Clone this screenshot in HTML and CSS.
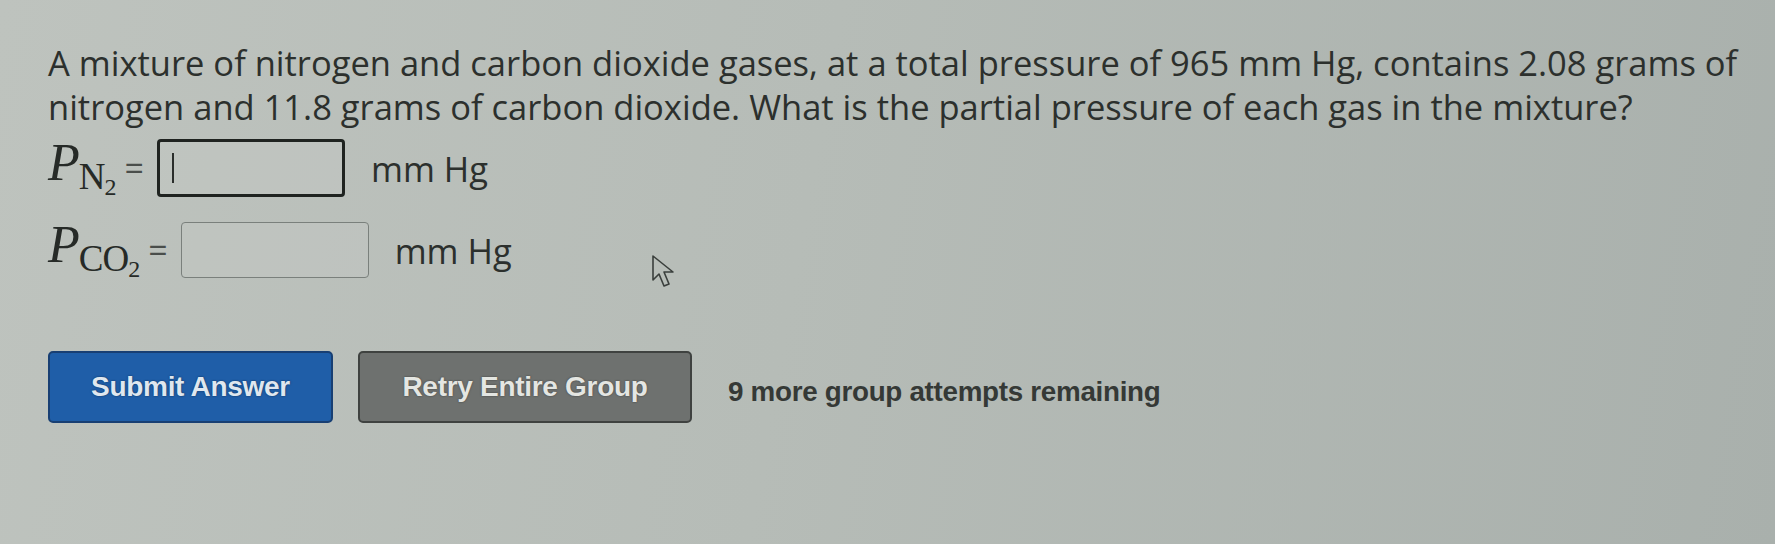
FILE: index.html
```html
<!DOCTYPE html>
<html lang="en">
<head>
<meta charset="UTF-8" />
<title>Partial Pressure Question</title>
<link rel="stylesheet" href="styles.css">
</head>
<body>
<div class="question">
  <p class="prompt">A mixture of nitrogen and carbon dioxide gases, at a total pressure of 965 mm Hg, contains 2.08 grams of nitrogen and 11.8 grams of carbon dioxide. What is the partial pressure of each gas in the mixture?</p>

  <div class="answer-row">
    <span class="math"><i>P</i><sub>N<sub>2</sub></sub></span>
    <span class="eq">=</span>
    <span class="field focused"><span class="caret"></span></span>
    <span class="unit">mm Hg</span>
  </div>
  <div class="answer-row">
    <span class="math"><i>P</i><sub>CO<sub>2</sub></sub></span>
    <span class="eq">=</span>
    <span class="field"></span>
    <span class="unit">mm Hg</span>
  </div>

  <div class="actions">
    <button class="btn btn-submit">Submit Answer</button>
    <button class="btn btn-retry">Retry Entire Group</button>
    <span class="attempts">9 more group attempts remaining</span>
  </div>

  <!-- mouse pointer -->
  <svg class="pointer" width="28" height="36" viewBox="0 0 28 36">
    <path d="M2 2 L2 26 L8 20 L13 32 L18 30 L13 18 L22 18 Z" fill="none" stroke="#3a3f3c" stroke-width="1.6" stroke-linejoin="round"/>
  </svg>
</div>
</body>
</html>
```

FILE: styles.css
```css
:root {
  --text: #2c302d;
  --font: 'Open Sans', 'Noto Sans', sans-serif;
  --ui-font: 'Liberation Sans', Arial, sans-serif;
}

* { box-sizing: border-box; }

html, body {
  margin: 0;
  height: 100%;
}

body {
  background: linear-gradient(100deg, #bec3be 0%, #b6bcb7 45%, #a9b0ac 100%);
  color: var(--text);
  font-family: var(--font);
  overflow: hidden;
}

.question {
  position: relative;
  padding: 41px 0 0 48px;
}

.prompt {
  margin: 0;
  width: 1720px;
  font-size: 34.5px;
  line-height: 44px;
}

/* answer rows */
.answer-row {
  display: flex;
  align-items: center;
  height: 58px;
  margin-top: 10px;
}
.answer-row + .answer-row {
  margin-top: 24px;
}

.math {
  font-family: 'Liberation Serif', 'DejaVu Serif', serif;
  font-size: 52px;
  line-height: 1;
  color: #262a27;
  letter-spacing: -1px;
}
.math sub {
  font-size: 37px;
  vertical-align: -9px;
}
.math sub sub {
  font-size: 24px;
  vertical-align: -6px;
}

.eq {
  font-size: 34px;
  margin: 0 13px 0 9px;
  color: #4a4e4b;
}

.field {
  display: flex;
  align-items: center;
  width: 188px;
  height: 56px;
  border: 1px solid #7a807c;
  border-radius: 4px;
  background: rgba(255, 255, 255, 0.06);
}
.field.focused {
  border: 3px solid #1f2320;
  height: 58px;
}
.caret {
  width: 2px;
  height: 30px;
  margin-left: 12px;
  background: #2a2e2b;
}

.unit {
  font-size: 34.5px;
  margin-left: 26px;
}

/* buttons */
.actions {
  display: flex;
  align-items: center;
  margin-top: 72px;
}

.btn {
  font-family: var(--ui-font);
  font-weight: bold;
  font-size: 28px;
  height: 72px;
  border-radius: 5px;
  cursor: pointer;
  letter-spacing: -0.3px;
}
.btn-submit {
  width: 285px;
  background: #1f5ea8;
  border: 2px solid #183f73;
  color: #dfe7ef;
  text-shadow: 0 0 2px #0d2c52;
}
.btn-retry {
  width: 334px;
  margin-left: 25px;
  background: #6e716f;
  border: 2px solid #3f4240;
  color: #e4e6e2;
  text-shadow: 0 0 2px #3a3c3b;
}

.attempts {
  margin: 10px 0 0 36px;
  font-family: var(--ui-font);
  font-weight: bold;
  font-size: 27.8px;
  letter-spacing: -0.3px;
  color: #353936;
}

.pointer {
  position: absolute;
  left: 651px;
  top: 254px;
}
```
